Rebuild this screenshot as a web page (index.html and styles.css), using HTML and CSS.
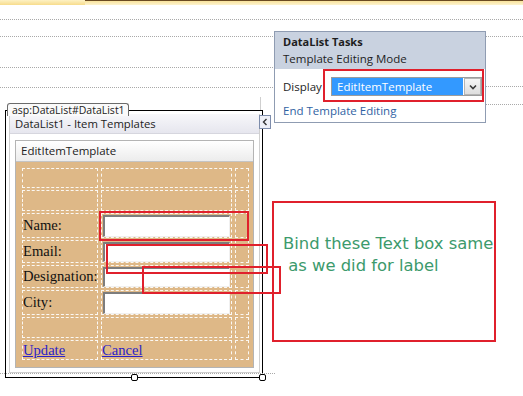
FILE: index.html
```html
<!DOCTYPE html>
<html lang="en">
<head>
  <meta charset="UTF-8">
  <title>DataList Template Editing</title>
  <link rel="stylesheet" href="styles.css">
</head>
<body>

  <div class="topbar">
    <div class="topbar-left"></div>
    <div class="topbar-right"></div>
  </div>
  <div class="guide guide-1"></div>
  <div class="guide guide-2"></div>
  <div class="guide guide-3 short"></div>
  <div class="guide guide-4 short"></div>

  <div class="datalist">
    <div class="dl-head"><span class="dl-tab">asp:DataList#DataList1</span></div>
    <div class="dl-frame">
      <div class="dl-inner">
        <div class="dl-title">DataList1 - Item Templates</div>
        <div class="tpl">
          <div class="tpl-head">EditItemTemplate</div>
          <div class="tpl-body">
            <div class="cell"></div><div class="cell"></div><div class="cell"></div>
            <div class="cell"></div><div class="cell"></div><div class="cell"></div>
            <div class="cell">Name:</div><div class="cell"><span class="textbox"></span></div><div class="cell"></div>
            <div class="cell">Email:</div><div class="cell"><span class="textbox"></span></div><div class="cell"></div>
            <div class="cell">Designation:</div><div class="cell"><span class="textbox"></span></div><div class="cell"></div>
            <div class="cell">City:</div><div class="cell"><span class="textbox"></span></div><div class="cell"></div>
            <div class="cell"></div><div class="cell"></div><div class="cell"></div>
            <div class="cell"><a href="#">Update</a></div><div class="cell"><a href="#">Cancel</a></div><div class="cell"></div>
          </div>
        </div>
      </div>
    </div>
    <span class="smart-tag">
      <svg width="6" height="8" viewBox="0 0 6 8"><polyline points="4.5,1 1.5,4 4.5,7" fill="none" stroke="#333" stroke-width="1.4"/></svg>
    </span>
    <span class="handle handle-mid"></span>
    <span class="handle handle-end"></span>
  </div>

  <div class="guide-dec dec-right-1"></div>
  <div class="guide-dec dec-right-2"></div>
  <div class="guide-dec dec-bottom"></div>

  <div class="tasks">
    <div class="tasks-head">
      <div class="tasks-title">DataList Tasks</div>
      <div>Template Editing Mode</div>
    </div>
    <div class="tasks-row">
      <span class="tasks-label">Display</span>
      <span class="select">
        <span class="select-value">EditItemTemplate</span>
        <span class="select-btn">
          <svg width="8" height="6" viewBox="0 0 8 6"><polyline points="1,1.5 4,4.5 7,1.5" fill="none" stroke="#3a3a3a" stroke-width="1.6"/></svg>
        </span>
      </span>
    </div>
    <a class="tasks-link" href="#">End Template Editing</a>
  </div>

  <div class="mark mark-select"></div>
  <div class="mark mark-name"></div>
  <div class="mark mark-email"></div>
  <div class="mark mark-desig"></div>
  <div class="mark mark-note">
    <div class="note">Bind these Text box same
 as we did for label</div>
  </div>

</body>
</html>
```

FILE: styles.css
```css
body {
  margin: 0;
  width: 523px;
  height: 396px;
  overflow: hidden;
  position: relative;
  background-color: #fff;
  font-family: "Open Sans", Arial, sans-serif;
}
.topbar {
  display: flex;
  height: 5px;
}
.topbar-left {
  width: 85px;
  background: linear-gradient(#fdf1c4, #f7dc8c);
}
.topbar-right {
  flex: 1;
  border-top: 1px solid #6b4b22;
  background: linear-gradient(#f9e39c, #fdf3cf);
}
.guide {
  border-top: 1px dotted #a9a9a9;
}
.guide-1 { margin-top: 14px; }
.guide-2 { margin-top: 16px; }
.guide-3 { margin-top: 30px; }
.guide-4 { margin-top: 19px; }
.guide.short {
  width: 275px;
}
.guide-dec {
  position: absolute;
  border-top: 1px dotted #a9a9a9;
}
.dec-right-1 { left: 486px; top: 86px; width: 37px; }
.dec-right-2 { left: 486px; top: 104px; width: 37px; }
.dec-bottom { left: 0; top: 373px; width: 275px; }

/* DataList control */
.datalist {
  position: relative;
  margin: 9px 0 0 5px;
  width: 258px;
}
.dl-head {
  height: 13px;
  border-right: 1px solid #cfcfcf;
  margin-right: 2px;
}
.dl-tab {
  display: inline-block;
  margin-left: 2px;
  height: 12px;
  padding: 0 3px 0 4px;
  border: 1px solid #6b6b6b;
  border-bottom: none;
  border-radius: 3px 3px 0 0;
  font-size: 10.5px;
  line-height: 12px;
  color: #222;
  background-color: #fafafa;
}
.dl-frame {
  border: 1px solid #000;
  padding: 3px 2px 4px 3px;
}
.dl-inner {
  border: 1px solid #cfcfcf;
  border-top: none;
  padding-bottom: 4px;
}
.dl-title {
  height: 19px;
  border-bottom: 1px solid #d6d6de;
  padding-left: 5px;
  font-size: 11.3px;
  line-height: 19px;
  color: #222;
  background: linear-gradient(#f7f7fa, #e6e6ee);
}
.tpl {
  margin: 6px 5px 0 5px;
  border: 1px solid #b4b4b4;
}
.tpl-head {
  height: 20px;
  border-bottom: 1px solid #c4c4c4;
  padding-left: 5px;
  font-size: 11.5px;
  line-height: 20px;
  color: #222;
  background: linear-gradient(#ffffff, #ececec);
}
.tpl-body {
  display: grid;
  grid-template-columns: 76px 131px 14px;
  grid-template-rows: 20px 21px 25px 23px 23px 25px 21px 20px;
  gap: 2px 3px;
  padding: 6px 6px 7px 6px;
  background-color: #deb887;
  font-family: "Liberation Serif", "Times New Roman", serif;
  font-size: 14.6px;
  color: #111;
}
.cell {
  display: flex;
  align-items: center;
  box-sizing: border-box;
  border: 1px dashed rgba(255, 255, 255, 0.9);
  white-space: nowrap;
}
.cell a {
  color: #2a22c8;
}
.textbox {
  display: block;
  box-sizing: border-box;
  width: 127px;
  height: calc(100% - 1px);
  margin-left: 1px;
  border-top: 2px solid #7d7d7d;
  border-left: 2px solid #7d7d7d;
  border-right: 1px solid #f0f0f0;
  border-bottom: 1px solid #f0f0f0;
  background-color: #fff;
}
.smart-tag {
  position: absolute;
  left: 254px;
  top: 18px;
  width: 12px;
  height: 14px;
  box-sizing: border-box;
  border: 1px solid #7d8cab;
  background-color: #eef0f7;
  display: flex;
  align-items: center;
  justify-content: center;
}
.handle {
  position: absolute;
  top: 277px;
  width: 7px;
  height: 7px;
  box-sizing: border-box;
  border: 1px solid #000;
  border-radius: 2px;
  background-color: #fff;
}
.handle-mid { left: 126px; }
.handle-end { left: 254px; }

/* Tasks panel */
.tasks {
  position: absolute;
  left: 274px;
  top: 31px;
  width: 212px;
  height: 92px;
  box-sizing: border-box;
  border: 1px solid #8f9cb2;
  background-color: #fff;
  font-size: 11.5px;
  color: #1e1e1e;
}
.tasks-head {
  height: 37px;
  padding: 1px 0 0 8px;
  box-sizing: border-box;
  line-height: 17px;
  background-color: #c9d2e0;
}
.tasks-title {
  font-weight: bold;
  font-size: 11px;
}
.tasks-row {
  display: flex;
  align-items: center;
  height: 19px;
  margin-top: 8px;
  padding-left: 8px;
}
.tasks-label {
  width: 48px;
}
.select {
  display: flex;
  width: 151px;
  height: 19px;
  box-sizing: border-box;
  border: 1px solid #9c9c9c;
  background-color: #fff;
}
.select-value {
  width: 131px;
  padding-left: 5px;
  box-sizing: border-box;
  line-height: 17px;
  color: #fff;
  background-color: #3399ff;
}
.select-btn {
  width: 17px;
  margin-left: 1px;
  box-sizing: border-box;
  border: 1px solid #b5b5b5;
  background: linear-gradient(#f6f6f6, #dedede);
  display: flex;
  align-items: center;
  justify-content: center;
}
.tasks-link {
  display: block;
  margin-top: 6px;
  padding-left: 8px;
  line-height: 17px;
  color: #2f62a3;
  text-decoration: none;
}

/* red annotation boxes */
.mark {
  position: absolute;
  box-sizing: border-box;
  border: 2px solid #e0202c;
}
.mark-select { left: 323px; top: 69px; width: 161px; height: 33px; }
.mark-name { left: 99px; top: 211px; width: 150px; height: 30px; }
.mark-email { left: 106px; top: 244px; width: 162px; height: 30px; }
.mark-desig { left: 142px; top: 266px; width: 139px; height: 28px; }
.mark-note { left: 272px; top: 201px; width: 224px; height: 141px; }
.note {
  padding: 30px 0 0 9px;
  white-space: pre;
  font-family: "DejaVu Sans", Verdana, sans-serif;
  font-size: 16.4px;
  line-height: 22px;
  color: #3c9a6c;
}
```
